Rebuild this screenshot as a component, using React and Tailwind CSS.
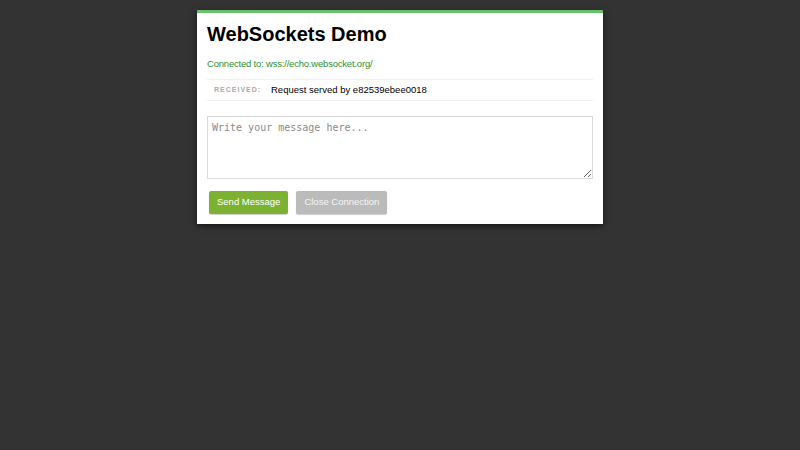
export default function App() {
  return (
    <div className="min-h-[450px] w-full bg-[#333333] font-['Liberation_Sans',Arial,sans-serif]">
      <div className="mx-auto w-[406px] pt-[10px]">
        <div className="border-t-[3px] border-[#6abf69] bg-white px-[10px] pb-[10px] shadow-[0_2px_6px_rgba(0,0,0,0.6)]">
          <h1 className="pt-[8px] text-[20px] font-bold leading-[26px] text-black">WebSockets Demo</h1>
          <div className="mt-[10px] text-[9.5px] leading-[14px] tracking-[-0.2px] text-[#2f8f2f]">Connected to: wss://echo.websocket.org/</div>
          <div className="mt-[8px] flex items-center border-y border-[#f0f0f0] py-[4px]">
            <span className="w-[64px] pl-[7px] text-[7px] font-bold uppercase tracking-[1px] text-[#aaaaaa]">Received:</span>
            <span className="text-[9.5px] leading-[12px] text-black">Request served by e82539ebee0018</span>
          </div>
          <textarea
            className="mt-[15px] block h-[63px] w-full resize-y border border-[#d9d9d9] px-[4px] py-[3px] font-['DejaVu_Sans_Mono',monospace] text-[10px] text-black outline-none placeholder:text-[#8a8a8a]"
            placeholder="Write your message here..."
          />
          <div className="mt-[12px] flex gap-[8px] pl-[2px]">
            <button className="h-[23px] rounded-[2px] bg-[#7cb132] px-[8px] text-[9.5px] text-white shadow-[0_1px_1px_rgba(0,0,0,0.2)]">Send Message</button>
            <button className="h-[23px] rounded-[2px] bg-[#bbbbbb] px-[8px] text-[9.5px] text-[#f5f5f5] shadow-[0_1px_1px_rgba(0,0,0,0.2)]">Close Connection</button>
          </div>
        </div>
      </div>
    </div>
  )
}
